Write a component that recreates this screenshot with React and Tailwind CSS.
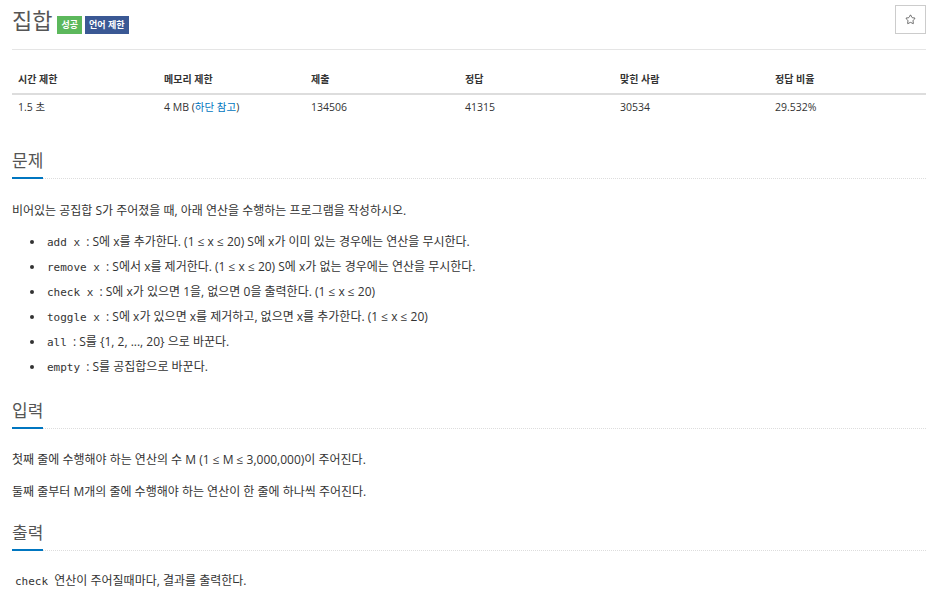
import { Star } from "lucide-react";

const font = "font-['Open_Sans','Noto_Sans_CJK_KR',sans-serif]";
const mono = "font-['DejaVu_Sans_Mono','Liberation_Mono',monospace]";

const cols = "grid grid-cols-[146px_147px_154px_155px_155px_155px]";

function Code({ children }) {
  return <code className={`${mono} text-[11px] leading-none px-[3px] text-[#333]`}>{children}</code>;
}

function SectionTitle({ children }) {
  return (
    <div className="flex items-end">
      <h2 className="text-[17px] leading-[24px] text-[#555] pb-[4px] border-b-2 border-[#0076c0]">
        {children}
      </h2>
      <div className="flex-1 border-b border-dotted border-[#ddd]" />
    </div>
  );
}

const rules = [
  ["add x", " : S에 x를 추가한다. (1 ≤ x ≤ 20) S에 x가 이미 있는 경우에는 연산을 무시한다."],
  ["remove x", " : S에서 x를 제거한다. (1 ≤ x ≤ 20) S에 x가 없는 경우에는 연산을 무시한다."],
  ["check x", " : S에 x가 있으면 1을, 없으면 0을 출력한다. (1 ≤ x ≤ 20)"],
  ["toggle x", " : S에 x가 있으면 x를 제거하고, 없으면 x를 추가한다. (1 ≤ x ≤ 20)"],
  ["all", " : S를 {1, 2, ..., 20} 으로 바꾼다."],
  ["empty", " : S를 공집합으로 바꾼다."],
];

export default function App() {
  return (
    <div className={`${font} bg-white text-[#333] min-h-screen px-3`}>
      {/* Title row */}
      <div className="flex justify-between items-start h-[50px] border-b border-[#e5e5e5]">
        <div className="flex items-end gap-[3px] mt-[6px]">
          <h1 className="text-[22px] leading-[28px] text-[#555] mr-[2px]">집합</h1>
          <span className="bg-[#5cb85c] text-white text-[9px] font-bold h-[18px] px-[4px] flex items-center">
            성공
          </span>
          <span className="bg-[#3a5894] text-white text-[9px] font-bold h-[18px] px-[4px] flex items-center">
            언어 제한
          </span>
        </div>
        <button className="mt-[5px] w-[31px] h-[29px] border border-[#ccc] flex items-center justify-center text-[#333]">
          <Star size={11} strokeWidth={1.5} />
        </button>
      </div>

      {/* Info table */}
      <div className="mt-[15px] text-[10px]">
        <div className={`${cols} h-[30px] items-center border-b-2 border-[#ddd] font-bold`}>
          {["시간 제한", "메모리 제한", "제출", "정답", "맞힌 사람", "정답 비율"].map((h) => (
            <div key={h} className="pl-[6px]">{h}</div>
          ))}
        </div>
        <div className={`${cols} h-[26px] items-center text-[10.5px]`}>
          <div className="pl-[6px]">1.5 초</div>
          <div className="pl-[6px]">
            4 MB (<span className="text-[#0076c0]">하단 참고</span>)
          </div>
          <div className="pl-[6px]">134506</div>
          <div className="pl-[6px]">41315</div>
          <div className="pl-[6px]">30534</div>
          <div className="pl-[6px]">29.532%</div>
        </div>
      </div>

      {/* 문제 */}
      <div className="mt-[28px]">
        <SectionTitle>문제</SectionTitle>
        <p className="mt-[23px] text-[12px] leading-[18px]">
          비어있는 공집합 S가 주어졌을 때, 아래 연산을 수행하는 프로그램을 작성하시오.
        </p>
        <ul className="mt-[13px] pl-[18px] text-[12px] leading-[18px] flex flex-col gap-[7px]">
          {rules.map(([c, t]) => (
            <li key={c} className="flex items-center h-[18px]">
              <span className="w-[4px] h-[4px] rounded-full bg-[#333] mr-[10px] shrink-0" />
              <span>
                <Code>{c}</Code>
                {t}
              </span>
            </li>
          ))}
        </ul>
      </div>

      {/* 입력 */}
      <div className="mt-[23px]">
        <SectionTitle>입력</SectionTitle>
        <p className="mt-[22px] text-[12px] leading-[18px]">
          첫째 줄에 수행해야 하는 연산의 수 M (1 ≤ M ≤ 3,000,000)이 주어진다.
        </p>
        <p className="mt-[14px] text-[12px] leading-[18px]">
          둘째 줄부터 M개의 줄에 수행해야 하는 연산이 한 줄에 하나씩 주어진다.
        </p>
      </div>

      {/* 출력 */}
      <div className="mt-[20px]">
        <SectionTitle>출력</SectionTitle>
        <p className="mt-[21px] text-[12px] leading-[18px]">
          <Code>check</Code> 연산이 주어질때마다, 결과를 출력한다.
        </p>
      </div>
    </div>
  );
}
